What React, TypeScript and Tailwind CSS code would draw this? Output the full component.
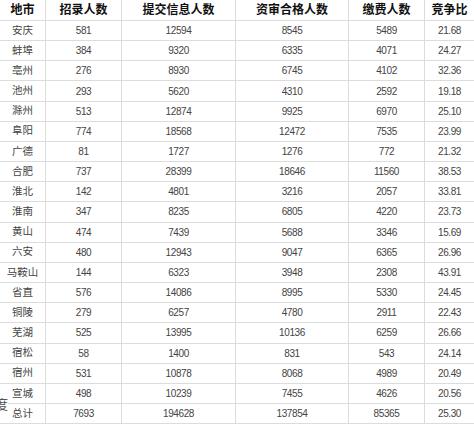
const headers = ['地市', '招录人数', '提交信息人数', '资审合格人数', '缴费人数', '竞争比'];

const rows: string[][] = [
  ['安庆', '581', '12594', '8545', '5489', '21.68'],
  ['蚌埠', '384', '9320', '6335', '4071', '24.27'],
  ['亳州', '276', '8930', '6745', '4102', '32.36'],
  ['池州', '293', '5620', '4310', '2592', '19.18'],
  ['滁州', '513', '12874', '9925', '6970', '25.10'],
  ['阜阳', '774', '18568', '12472', '7535', '23.99'],
  ['广德', '81', '1727', '1276', '772', '21.32'],
  ['合肥', '737', '28399', '18646', '11560', '38.53'],
  ['淮北', '142', '4801', '3216', '2057', '33.81'],
  ['淮南', '347', '8235', '6805', '4220', '23.73'],
  ['黄山', '474', '7439', '5688', '3346', '15.69'],
  ['六安', '480', '12943', '9047', '6365', '26.96'],
  ['马鞍山', '144', '6323', '3948', '2308', '43.91'],
  ['省直', '576', '14086', '8995', '5330', '24.45'],
  ['铜陵', '279', '6257', '4780', '2911', '22.43'],
  ['芜湖', '525', '13995', '10136', '6259', '26.66'],
  ['宿松', '58', '1400', '831', '543', '24.14'],
  ['宿州', '531', '10878', '8068', '4989', '20.49'],
  ['宣城', '498', '10239', '7455', '4626', '20.56'],
  ['总计', '7693', '194628', '137854', '85365', '25.30'],
];

const font = { fontFamily: '"Liberation Sans", "Noto Sans CJK SC", sans-serif' };

export default function App() {
  return (
    <div className="relative w-[474px] h-[424px] overflow-hidden bg-white" style={font}>
      <div className="grid grid-cols-[46px_76px_114px_113px_76px_49px]">
        {headers.map((h, i) => (
          <div
            key={h}
            className={`h-[21px] flex items-center justify-center border-b border-[#dcdcdc] text-[12px] font-bold text-[#111] ${i < 5 ? 'border-r' : ''}`}
          >
            {h}
          </div>
        ))}
        {rows.map((r) =>
          r.map((c, i) => (
            <div
              key={r[0] + i}
              className={`h-[20.16px] flex items-center justify-center border-b border-[#dcdcdc] text-[#444] ${i < 5 ? 'border-r' : ''} ${i === 0 ? 'text-[10.5px]' : 'text-[10px] tracking-[-0.4px]'}`}
            >
              {c}
            </div>
          ))
        )}
      </div>
      {/* stray glyph from the source page, clipped at the left edge */}
      <span className="absolute left-[-5px] top-[398px] text-[13px] leading-none text-[#555] bg-white">度</span>
    </div>
  );
}
